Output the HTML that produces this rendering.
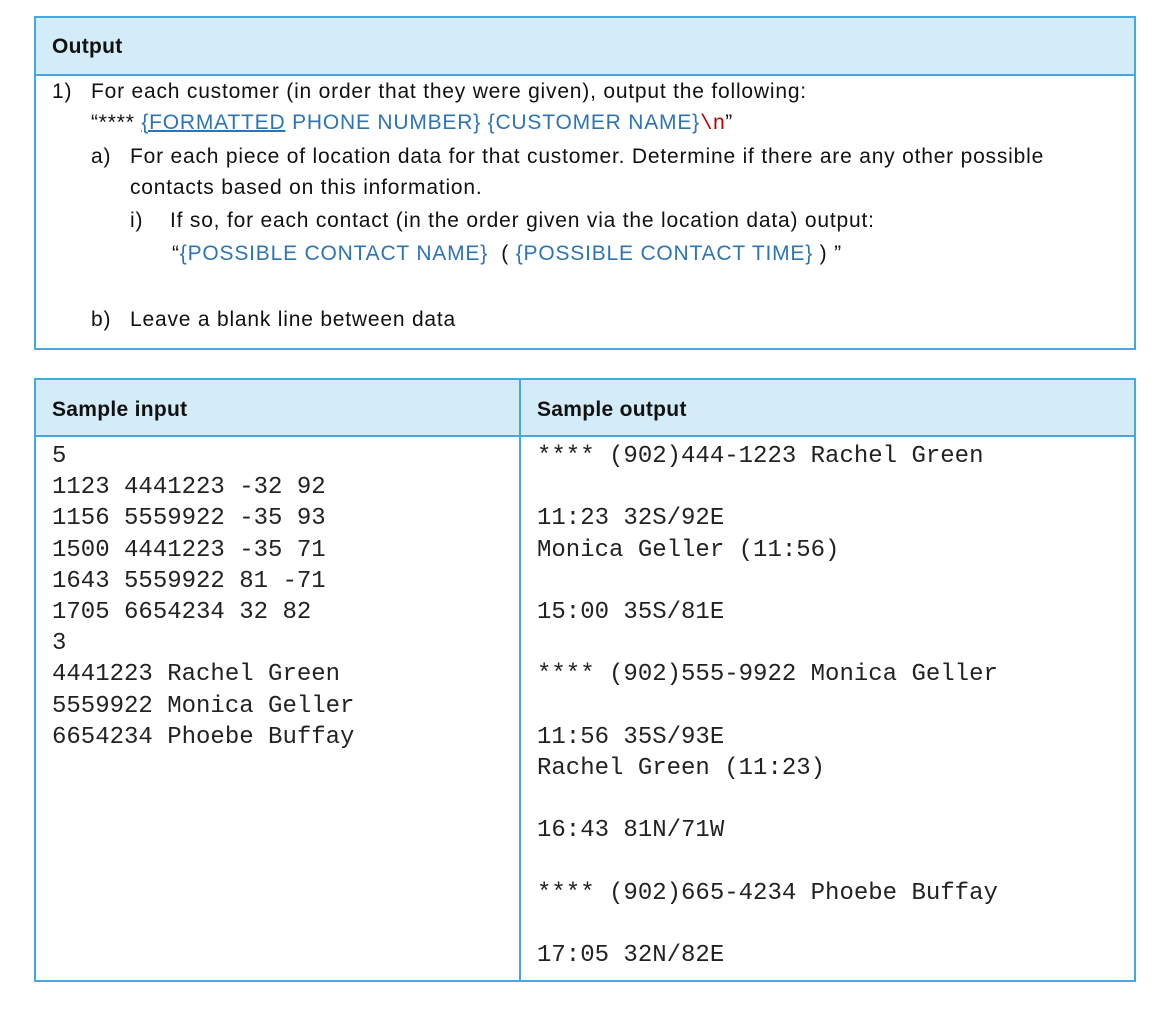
<!DOCTYPE html>
<html><head><meta charset="utf-8"><style>
*{margin:0;padding:0;box-sizing:border-box}
body{width:1166px;height:1012px;background:#fff;position:relative;font-family:"Liberation Sans",sans-serif;color:#111;overflow:hidden}
.box{position:absolute;border:2px solid #45a9dc}
.hd{position:absolute;background:#d4ebf8;border-bottom:2px solid #45a9dc}
.t{position:absolute;font-size:21px;white-space:nowrap;line-height:26px;letter-spacing:0.8px}
.b{font-weight:bold;letter-spacing:0.3px}
.bl{color:#2e74b5}
.mono{position:absolute;font-family:"Liberation Mono",monospace;font-size:24px;line-height:31.2px;white-space:pre;color:#222}
</style></head><body>
<div class="box" style="left:34px;top:16px;width:1102px;height:334px">
 <div class="hd" style="left:0;top:0;width:1098px;height:58px"></div>
</div>
<div class="t b" style="left:52px;top:34px">Output</div>
<div class="t" style="left:52px;top:79px">1)</div>
<div class="t" style="left:91px;top:79px">For each customer (in order that they were given), output the following:</div>
<div class="t" style="left:91px;top:110px">“**** <span class="bl"><u style="text-decoration-thickness:2px">{FORMATTED</u> PHONE NUMBER} {CUSTOMER NAME}</span><span style="font-family:'Liberation Mono',monospace;color:#c00000;letter-spacing:0">\n</span>”</div>
<div class="t" style="left:91px;top:144px">a)</div>
<div class="t" style="left:130px;top:144px">For each piece of location data for that customer. Determine if there are any other possible</div>
<div class="t" style="left:130px;top:175px">contacts based on this information.</div>
<div class="t" style="left:130px;top:208px">i)</div>
<div class="t" style="left:170px;top:208px">If so, for each contact (in the order given via the location data) output:</div>
<div class="t" style="left:172px;top:241px">“<span class="bl">{POSSIBLE CONTACT NAME}</span>&nbsp; ( <span class="bl">{POSSIBLE CONTACT TIME}</span> ) ”</div>
<div class="t" style="left:91px;top:307px">b)</div>
<div class="t" style="left:130px;top:307px">Leave a blank line between data</div>

<div class="box" style="left:34px;top:378px;width:1102px;height:604px">
 <div class="hd" style="left:0;top:0;width:1098px;height:57px"></div>
 <div style="position:absolute;left:483px;top:0;width:2px;height:600px;background:#45a9dc"></div>
</div>
<div class="t b" style="left:52px;top:397px">Sample input</div>
<div class="t b" style="left:537px;top:397px">Sample output</div>
<div class="mono" style="left:52px;top:441px">5
1123 4441223 -32 92
1156 5559922 -35 93
1500 4441223 -35 71
1643 5559922 81 -71
1705 6654234 32 82
3
4441223 Rachel Green
5559922 Monica Geller
6654234 Phoebe Buffay</div>
<div class="mono" style="left:537px;top:441px">**** (902)444-1223 Rachel Green

11:23 32S/92E
Monica Geller (11:56)

15:00 35S/81E

**** (902)555-9922 Monica Geller

11:56 35S/93E
Rachel Green (11:23)

16:43 81N/71W

**** (902)665-4234 Phoebe Buffay

17:05 32N/82E</div>
</body></html>
